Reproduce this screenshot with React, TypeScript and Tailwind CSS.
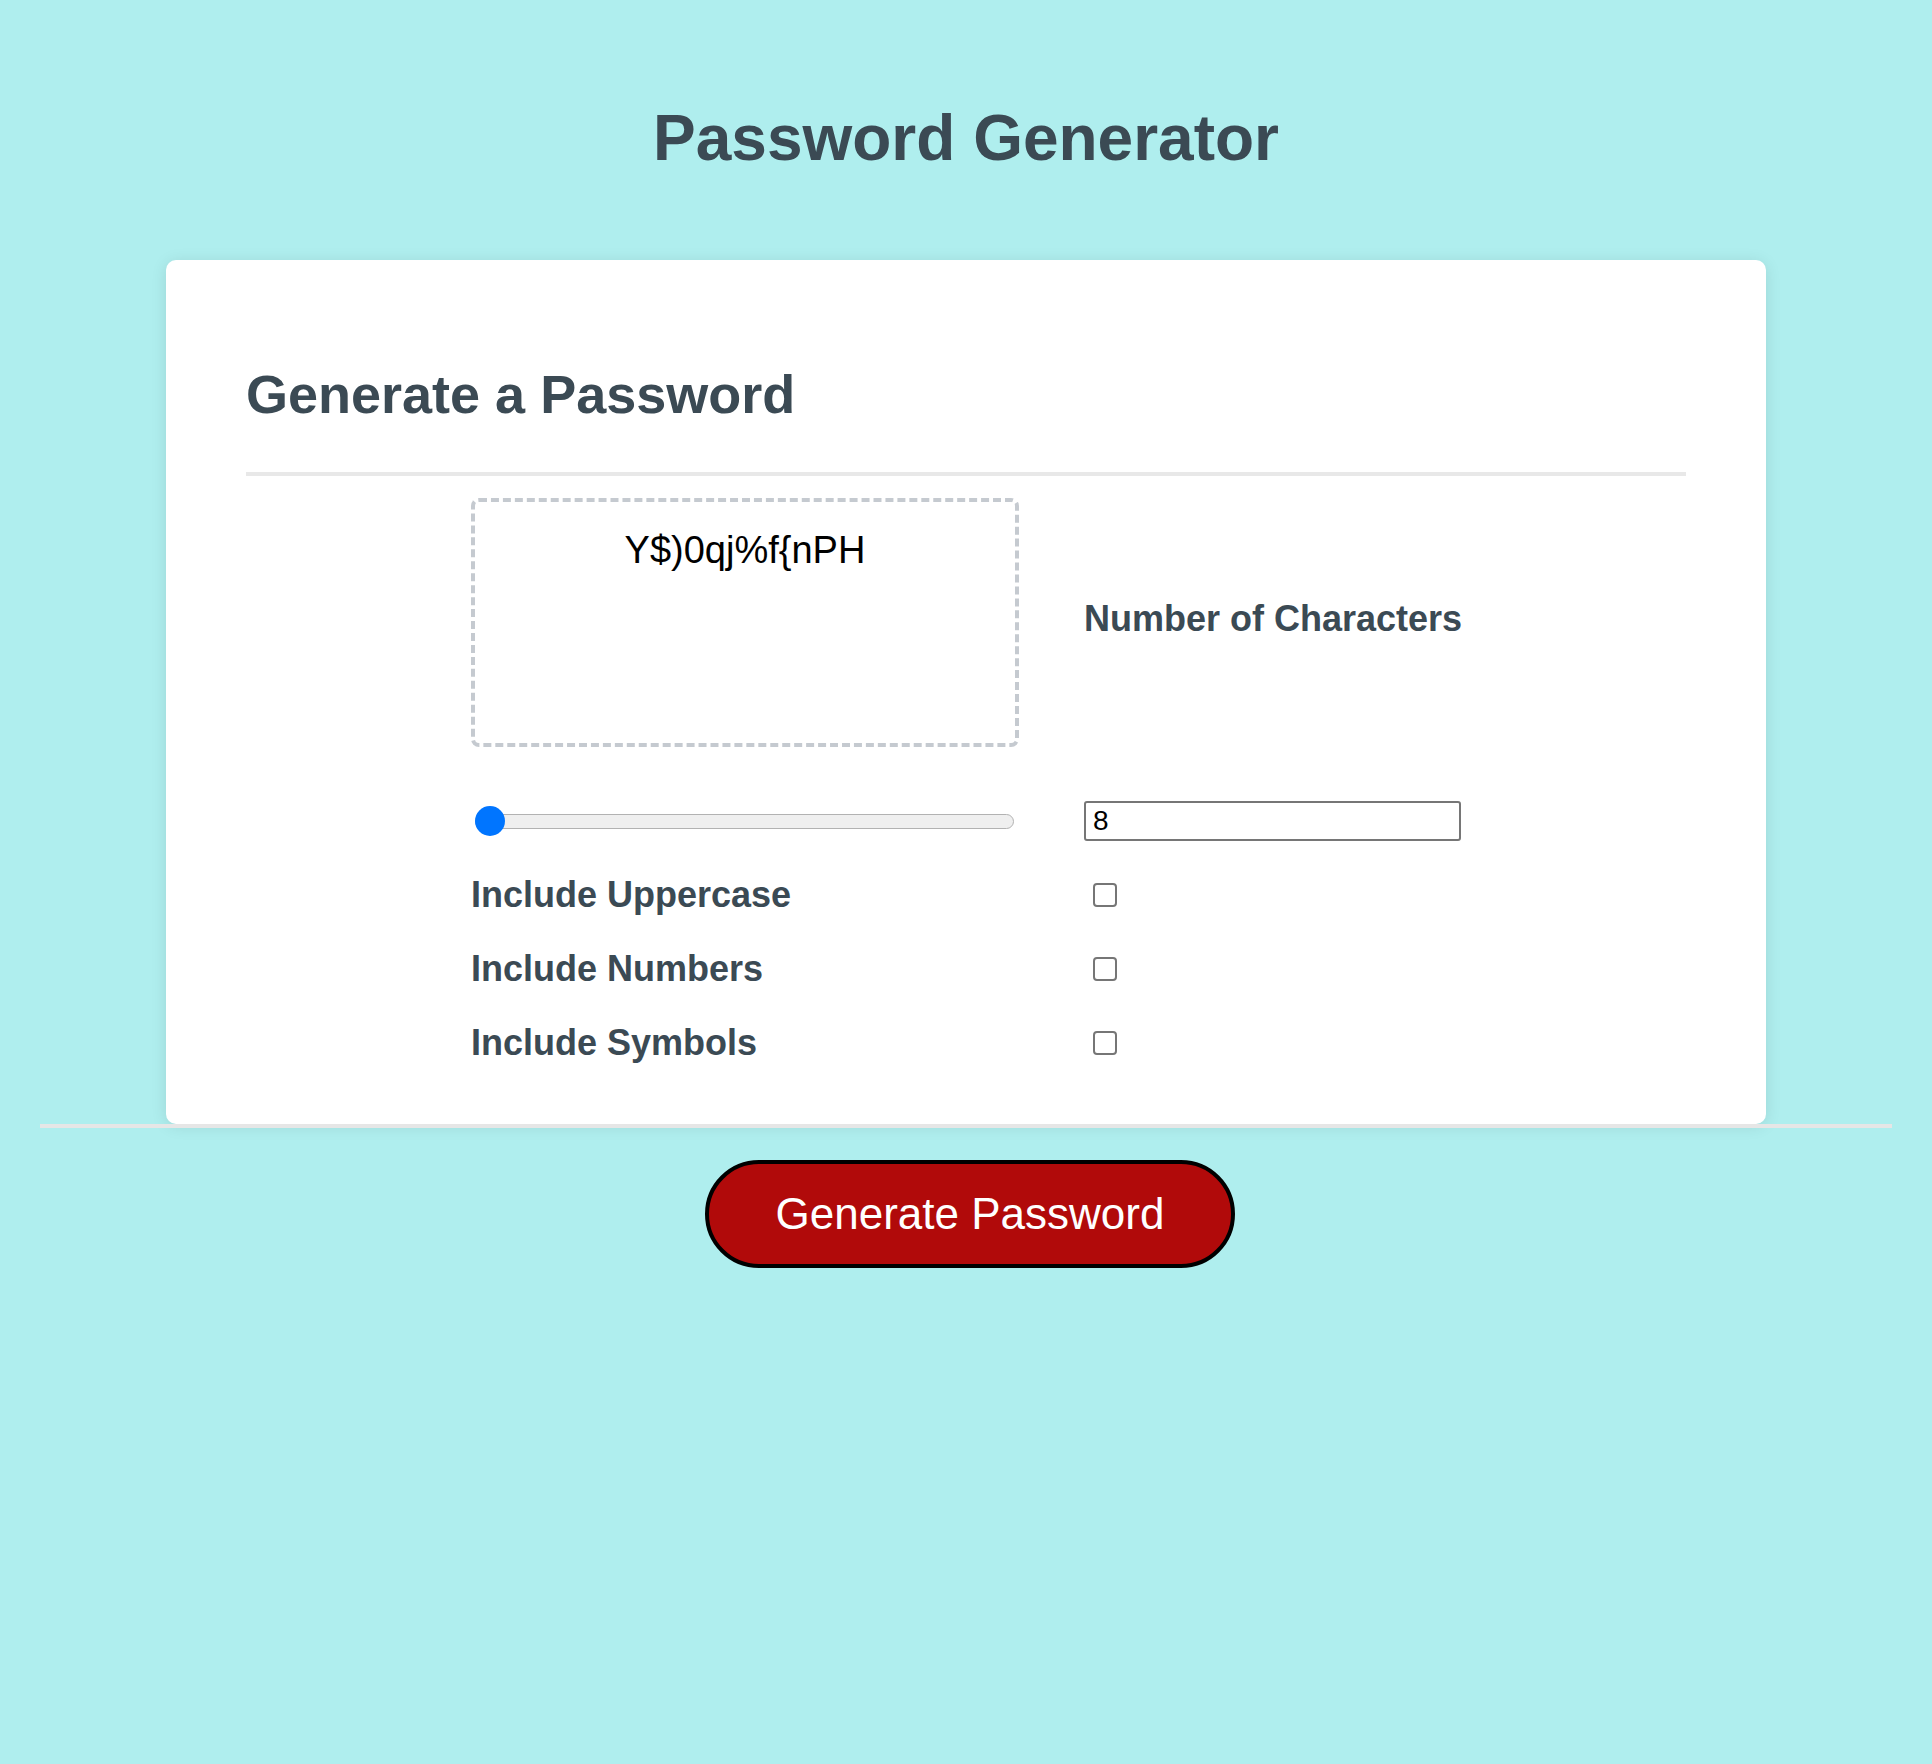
import { useState } from 'react'

const labelCls = "whitespace-nowrap text-[36px] font-bold leading-[normal] text-[#3b4a54]"

function Row({ label, checked, onChange }: { label: string; checked: boolean; onChange: () => void }) {
  return (
    <div className="grid h-[74px] grid-cols-[548px_377px] items-center gap-x-[65px]">
      <span className={labelCls}>{label}</span>
      <div>
        <button
          type="button"
          onClick={onChange}
          className="ml-[9px] block h-[24px] w-[24px] rounded-[4px] border-2 border-[#767676] bg-white"
        >
          {checked && <span className="block text-[18px] leading-[20px] text-[#0075ff]">✓</span>}
        </button>
      </div>
    </div>
  )
}

export default function App() {
  const [upper, setUpper] = useState(false)
  const [numbers, setNumbers] = useState(false)
  const [symbols, setSymbols] = useState(false)
  const password = 'Y$)0qj%f{nPH'

  return (
    <div className="min-h-screen bg-[#afeeee] font-['Liberation_Sans',Arial,sans-serif]">
      <h1 className="pt-[101px] text-center text-[64px] font-bold leading-[74px] text-[#3b4a54]">
        Password Generator
      </h1>

      <div className="mx-[40px] mt-[85px]">
        <div className="mx-auto w-[1600px] rounded-[10px] bg-white px-[80px] pt-[103px] pb-[44px] shadow-[0_2px_16px_rgba(0,0,0,0.1)]">
          <h2 className="text-[54px] font-bold leading-[62px] text-[#3b4a54]">Generate a Password</h2>
          <div className="mt-[47px] h-[4px] bg-[#e8e8e8]" />

          <div className="mx-auto mt-[22px] w-fit">
            <div className="grid grid-cols-[548px_377px] items-center gap-x-[65px]">
              <div className="h-[249px] rounded-[8px] border-[4px] border-dashed border-[#c5cad0] pt-[27px] text-center text-[38px] leading-[normal] text-black">
                {password}
              </div>
              <span className={labelCls + " mb-[8px]"}>Number of Characters</span>
            </div>

            <div className="mt-[37px] grid h-[74px] grid-cols-[548px_377px] items-center gap-x-[65px]">
              <div className="relative ml-[4px] flex h-[30px] w-[539px] items-center">
                <div className="h-[15px] w-full rounded-full border-[1.5px] border-[#b2b2b2] bg-[#efefef]" />
                <div className="absolute top-0 left-0 h-[30px] w-[30px] rounded-full bg-[#0075ff]" />
              </div>
              <div className="flex h-[40px] w-[377px] items-center rounded-[3px] border-2 border-[#767676] pl-[7px] text-[28px] leading-none text-black">
                8
              </div>
            </div>

            <Row label="Include Uppercase" checked={upper} onChange={() => setUpper(!upper)} />
            <Row label="Include Numbers" checked={numbers} onChange={() => setNumbers(!numbers)} />
            <Row label="Include Symbols" checked={symbols} onChange={() => setSymbols(!symbols)} />
          </div>
        </div>
        <div className="h-[4px] bg-[#e6e6e6]" />
      </div>

      <div className="mt-[32px] flex justify-center pl-[8px]">
        <button
          type="button"
          className="flex h-[108px] w-[530px] items-center justify-center rounded-full border-[4px] border-black bg-[#b10a0a] text-[44px] leading-none text-white"
        >
          Generate Password
        </button>
      </div>
    </div>
  )
}
